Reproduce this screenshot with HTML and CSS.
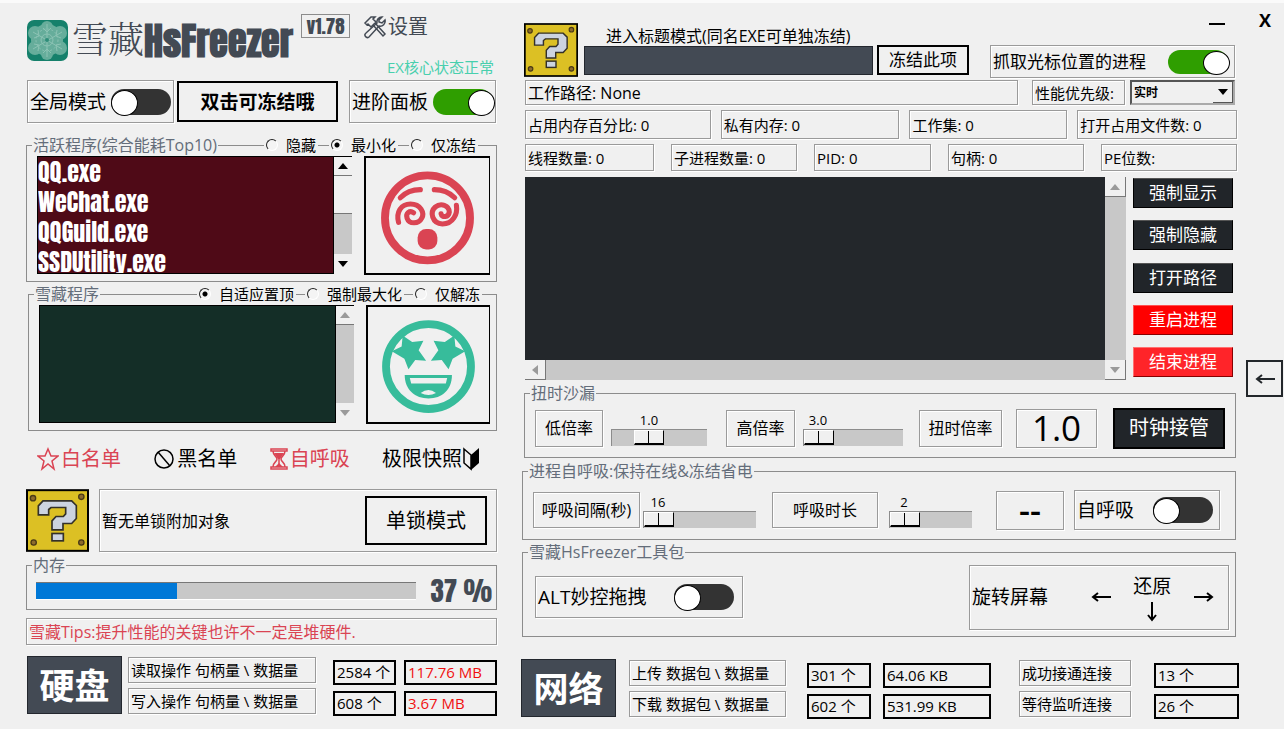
FILE: index.html
```
<!DOCTYPE html>
<html lang="zh-CN">
<head>
    <meta charset="UTF-8">
    <meta name="viewport" content="width=device-width, initial-scale=1.0">
    <title>雪藏HsFreezer</title>
    <link rel="stylesheet" href="styles.css">
</head>
<body>

<!-- shared icons -->
<svg class="defs" aria-hidden="true">
    <symbol id="block" viewBox="18 27 189 188">
        <rect x="18" y="27" width="189" height="188" fill="#000"/>
        <rect x="24" y="33" width="177" height="176" fill="#dcc024"/>
        <g fill="#8d6b2c" stroke="#4a3a16" stroke-width="4">
            <circle cx="39" cy="54" r="8"/><circle cx="184" cy="50" r="8"/>
            <circle cx="41" cy="187" r="8"/><circle cx="184" cy="187" r="8"/>
        </g>
        <g fill="#ccd3e0" stroke="#333029" stroke-width="5">
            <path d="M55 104V77L69 62H155L169 76V115L155 130H129V149H96V122L108 109H130L137 101V82H93L86 88V104Z"/>
            <rect x="96" y="160" width="34" height="22"/>
        </g>
    </symbol>
    <symbol id="up" viewBox="0 0 10 6"><path d="M0 6L5 0L10 6Z" fill="currentColor"/></symbol>
    <symbol id="down" viewBox="0 0 10 6"><path d="M0 0L5 6L10 0Z" fill="currentColor"/></symbol>
    <symbol id="left" viewBox="0 0 6 10"><path d="M6 0L0 5L6 10Z" fill="currentColor"/></symbol>
    <symbol id="arrow" viewBox="0 0 20 12"><path d="M2 6H20M7 2L2 6L7 10" fill="none" stroke="currentColor" stroke-width="2"/></symbol>
</svg>

<div class="top-edge"></div>

<div class="window">

<!-- left side -->
<div class="left">
    <header class="header">
        <svg class="logo" viewBox="0 0 41 41" aria-hidden="true">
            <rect width="41" height="41" rx="7" fill="#15806b"/>
            <g fill="#66ad9b">
                <circle cx="20" cy="20" r="16"/>
                <circle cx="20" cy="7" r="6"/><circle cx="20" cy="34" r="6"/>
                <circle cx="8" cy="13" r="7"/><circle cx="33" cy="13" r="7"/>
                <circle cx="8" cy="28" r="7"/><circle cx="33" cy="28" r="7"/>
            </g>
            <g fill="none" stroke="#8cc3b4" stroke-width="1">
                <path d="M20 4V37M6 12L35 29M35 12L6 29M16 8L20 12L24 8M16 33L20 29L24 33M7 18L12 16L11 10M34 18L29 16L30 10M7 24L12 25L11 31M34 24L29 25L30 31"/>
                <circle cx="20" cy="20" r="6"/><circle cx="20" cy="20" r="11" stroke-dasharray="2 2"/>
            </g>
            <circle cx="20" cy="20" r="2" fill="#2f8d79"/>
        </svg>
        <h1 class="brand"><span class="brand-cn">雪藏</span><span class="brand-en heavy">HsFreezer</span></h1>
        <div class="header-side">
            <div class="header-top">
                <span class="version heavy">v1.78</span>
                <button class="settings">
                    <svg width="24" height="24" viewBox="0 0 24 24" fill="none" stroke="currentColor" stroke-width="1.5" aria-hidden="true">
                        <path d="M2 8L8 2L12 2L10 4L13 7L8 12L5 9L4 10Z"/>
                        <path d="M10 10L20 21L22 19L12 8"/>
                        <path d="M19 2A5 5 0 0 0 14 8L3 18A2 2 0 0 0 6 22L16 11A5 5 0 0 0 22 5L19 8L16 7L16 5Z"/>
                    </svg>设置
                </button>
            </div>
            <span class="core-state">EX核心状态正常</span>
        </div>
    </header>

    <div class="mode-row">
        <label class="box switch-box">全局模式 <input type="checkbox" class="switch"></label>
        <button class="btn-line freeze-btn">双击可冻结哦</button>
        <label class="box switch-box">进阶面板 <input type="checkbox" class="switch" checked></label>
    </div>

    <fieldset class="group programs">
        <legend>活跃程序(综合能耗Top10)</legend>
        <div class="radios">
            <label><input type="radio" name="freeze" class="radio"> 隐藏</label>
            <label><input type="radio" name="freeze" class="radio" checked> 最小化</label>
            <label><input type="radio" name="freeze" class="radio"> 仅冻结</label>
        </div>
        <div class="list-row">
            <ul class="list list-active heavy">
                <li>QQ.exe</li>
                <li>WeChat.exe</li>
                <li>QQGuild.exe</li>
                <li>SSDUtility.exe</li>
            </ul>
            <div class="scroll">
                <button class="scroll-btn" aria-label="上"><svg width="10" height="6"><use href="#up"/></svg></button>
                <span class="scroll-thumb"></span>
                <span class="scroll-track"></span>
                <button class="scroll-btn" aria-label="下"><svg width="10" height="6"><use href="#down"/></svg></button>
            </div>
            <button class="face" aria-label="冻结">
                <svg viewBox="24 31 356 338" fill="none" stroke="#da4453" stroke-linecap="round">
                    <circle cx="202" cy="207" r="125" stroke-width="23"/>
                    <path d="M122 148Q145 124 181 124M222 124Q258 124 282 148" stroke-width="15"/>
                    <path d="M117 220C109 190 124 166 152 166C182 166 194 192 185 208C176 226 148 226 142 208C137 193 150 184 161 192" stroke-width="15"/>
                    <path d="M287 170C291 196 277 225 246 225C215 223 208 190 225 175C241 162 266 170 266 190C264 206 244 207 242 195" stroke-width="15"/>
                    <rect x="173" y="240" width="58" height="60" rx="25" fill="#da4453" stroke="none"/>
                </svg>
            </button>
        </div>
    </fieldset>

    <fieldset class="group programs frozen">
        <legend>雪藏程序</legend>
        <div class="radios">
            <label><input type="radio" name="thaw" class="radio" checked> 自适应置顶</label>
            <label><input type="radio" name="thaw" class="radio"> 强制最大化</label>
            <label><input type="radio" name="thaw" class="radio"> 仅解冻</label>
        </div>
        <div class="list-row">
            <ul class="list list-frozen heavy"></ul>
            <div class="scroll scroll-off">
                <button class="scroll-btn" aria-label="上"><svg width="10" height="6"><use href="#up"/></svg></button>
                <span class="scroll-track"></span>
                <button class="scroll-btn" aria-label="下"><svg width="10" height="6"><use href="#down"/></svg></button>
            </div>
            <button class="face" aria-label="解冻">
                <svg viewBox="28 476 356 338" fill="#37bc9b">
                    <circle cx="206" cy="651" r="125" fill="none" stroke="#37bc9b" stroke-width="23"/>
                    <path d="M130 560L158 579L191 575L177 603L199 634L167 632L147 659L135 628L98 606L127 592Z"/>
                    <path d="M282 560L254 579L221 575L235 603L213 634L245 632L265 659L277 628L314 606L285 592Z"/>
                    <path d="M136 676H275C275 720 245 745 206 745C167 745 136 720 136 676Z"/>
                    <path d="M151 685H261L257 701H155ZM183 729Q206 711 228 729Q206 741 183 729Z" fill="#f0f0f0"/>
                </svg>
            </button>
        </div>
    </fieldset>

    <nav class="links">
        <a href="#" class="red">
            <svg width="22" height="24" viewBox="1 0 22 24" fill="none" stroke="currentColor" stroke-width="1.5" aria-hidden="true"><path d="M12 2L15 9H22L16 14L18 22L12 17L6 22L8 14L2 9H9Z"/></svg>白名单</a>
        <a href="#">
            <svg width="22" height="24" viewBox="1 0 22 24" fill="none" stroke="currentColor" stroke-width="1.5" aria-hidden="true"><circle cx="12" cy="12" r="9"/><path d="M6 5L18 19"/></svg>黑名单</a>
        <a href="#" class="red">
            <svg width="18" height="24" viewBox="0 0 18 24" fill="none" stroke="currentColor" stroke-width="1.5" aria-hidden="true"><path d="M1 2H17V4H1ZM1 20H17V22H1ZM3 4C3 9 7 9 7 12C7 15 3 15 3 20M15 4C15 9 11 9 11 12C11 15 15 15 15 20M9 12V17"/><path d="M4 6H14L10 12H8ZM5 20L9 16L13 20Z" fill="currentColor" stroke="none"/></svg>自呼吸</a>
        <a href="#">极限快照<svg width="18" height="24" viewBox="0 0 18 24" aria-hidden="true"><path d="M2 2L9 8V22L2 16Z" fill="none" stroke="#000" stroke-width="1.5"/><path d="M9 8L17 1V16L9 23Z"/></svg></a>
    </nav>

    <div class="lock-row">
        <svg class="block-lg" aria-hidden="true"><use href="#block"/></svg>
        <div class="box lock-box">
            <span>暂无单锁附加对象</span>
            <button class="btn-line lock-btn">单锁模式</button>
        </div>
    </div>

    <fieldset class="group memory">
        <legend>内存</legend>
        <div class="memory-row">
            <div class="bar"><div class="bar-fill" style="width: 37%"></div></div>
            <span class="percent heavy">37 %</span>
        </div>
    </fieldset>

    <p class="box tips">雪藏Tips:提升性能的关键也许不一定是堆硬件.</p>

    <div class="stats">
        <div class="stats-title">硬盘</div>
        <div class="stats-col stats-names">
            <span class="box">读取操作 句柄量 \ 数据量</span>
            <span class="box">写入操作 句柄量 \ 数据量</span>
        </div>
        <div class="stats-col values disk-count">
            <span class="value">2584 个</span>
            <span class="value">608 个</span>
        </div>
        <div class="stats-col values disk-size">
            <span class="value value-red">117.76 MB</span>
            <span class="value value-red">3.67 MB</span>
        </div>
    </div>
</div>

<!-- right side -->
<div class="right">
    <div class="title-row">
        <svg class="block-sm" aria-hidden="true"><use href="#block"/></svg>
        <div class="title-mode">
            <label for="title">进入标题模式(同名EXE可单独冻结)</label>
            <input type="text" id="title" class="title-input">
        </div>
        <button class="btn-line item-btn">冻结此项</button>
        <div class="grab">
            <button class="minimize" aria-label="最小化"></button>
            <label class="box switch-box grab-box">抓取光标位置的进程 <input type="checkbox" class="switch" checked></label>
        </div>
    </div>

    <div class="path-row">
        <span class="box path">工作路径: None</span>
        <label class="box priority" for="priority">性能优先级:</label>
        <div class="select">
            <select id="priority"><option>实时</option></select>
            <span class="select-arrow"><svg width="10" height="6"><use href="#down"/></svg></span>
        </div>
    </div>

    <div class="info-row info-four">
        <span class="box">占用内存百分比: 0</span>
        <span class="box">私有内存: 0</span>
        <span class="box">工作集: 0</span>
        <span class="box">打开占用文件数: 0</span>
    </div>
    <div class="info-row info-five">
        <span class="box">线程数量: 0</span>
        <span class="box">子进程数量: 0</span>
        <span class="box">PID: 0</span>
        <span class="box">句柄: 0</span>
        <span class="box">PE位数:</span>
    </div>

    <div class="console-row">
        <div class="console">
            <textarea class="console-text" aria-label="进程信息" readonly></textarea>
            <div class="scroll-h">
                <button class="scroll-btn" aria-label="左"><svg width="6" height="10"><use href="#left"/></svg></button>
            </div>
        </div>
        <div class="scroll scroll-off scroll-wide">
            <button class="scroll-btn" aria-label="上"><svg width="10" height="6"><use href="#up"/></svg></button>
            <span class="scroll-track"></span>
            <button class="scroll-btn" aria-label="下"><svg width="10" height="6"><use href="#down"/></svg></button>
        </div>
        <div class="actions">
            <button class="action">强制显示</button>
            <button class="action">强制隐藏</button>
            <button class="action">打开路径</button>
            <button class="action action-red">重启进程</button>
            <button class="action action-light">结束进程</button>
        </div>
    </div>

    <fieldset class="group speed">
        <legend>扭时沙漏</legend>
        <div class="speed-row">
            <label class="box cell" for="low">低倍率</label>
            <div class="slider slider-low">
                <output>1.0</output>
                <input type="range" id="low" min="0" max="3" value="1">
            </div>
            <label class="box cell" for="high">高倍率</label>
            <div class="slider">
                <output>3.0</output>
                <input type="range" id="high" min="3" max="10" value="3">
            </div>
            <span class="box cell">扭时倍率</span>
            <span class="box cell big">1.0</span>
            <button class="clock-btn">时钟接管</button>
        </div>
    </fieldset>

    <fieldset class="group breath">
        <legend>进程自呼吸:保持在线&amp;冻结省电</legend>
        <div class="breath-row">
            <label class="box cell" for="gap">呼吸间隔(秒)</label>
            <div class="slider slider-gap">
                <output>16</output>
                <input type="range" id="gap" min="16" max="60" value="16">
            </div>
            <label class="box cell cell-time" for="time">呼吸时长</label>
            <div class="slider slider-time">
                <output>2</output>
                <input type="range" id="time" min="2" max="10" value="2">
            </div>
            <span class="box cell dashes">--</span>
            <label class="box switch-box">自呼吸 <input type="checkbox" class="switch"></label>
        </div>
    </fieldset>

    <fieldset class="group tools">
        <legend>雪藏HsFreezer工具包</legend>
        <div class="tools-row">
            <label class="box switch-box alt-box">ALT妙控拖拽 <input type="checkbox" class="switch"></label>
            <div class="box rotate">
                <span>旋转屏幕</span>
                <button aria-label="左转"><svg width="20" height="12"><use href="#arrow"/></svg></button>
                <div class="rotate-mid">
                    <button>还原</button>
                    <button aria-label="翻转"><svg class="arrow-down" width="20" height="12"><use href="#arrow"/></svg></button>
                </div>
                <button aria-label="右转"><svg class="arrow-right" width="20" height="12"><use href="#arrow"/></svg></button>
            </div>
        </div>
    </fieldset>

    <div class="stats net">
        <div class="stats-title">网络</div>
        <div class="stats-col net-names">
            <span class="box">上传 数据包 \ 数据量</span>
            <span class="box">下载 数据包 \ 数据量</span>
        </div>
        <div class="stats-col values net-count">
            <span class="value">301 个</span>
            <span class="value">602 个</span>
        </div>
        <div class="stats-col values net-size">
            <span class="value">64.06 KB</span>
            <span class="value">531.99 KB</span>
        </div>
        <div class="stats-col net-link">
            <span class="box">成功接通连接</span>
            <span class="box">等待监听连接</span>
        </div>
        <div class="stats-col values net-total">
            <span class="value">13 个</span>
            <span class="value">26 个</span>
        </div>
    </div>
</div>

<!-- window edge -->
<div class="edge">
    <button class="close">X</button>
    <button class="collapse" aria-label="收起"><svg width="20" height="12"><use href="#arrow"/></svg></button>
</div>

</div>
</body>
</html>
```
FILE: styles.css
```
* {
    box-sizing: border-box;
}

body {
    margin: 0;
    background-color: #f0f0f0;
    color: #000;
    font-family: "Open Sans", "Noto Sans CJK SC", sans-serif;
    font-size: 15px;
    line-height: 20px;
}

button, input, select, textarea {
    margin: 0;
    padding: 0;
    border: 0;
    border-radius: 0;
    background: none;
    color: inherit;
    font: inherit;
}

svg {
    display: block;
    flex: none;
}

h1, p, ul {
    margin: 0;
    padding: 0;
    font-weight: normal;
}

a {
    color: inherit;
    text-decoration: none;
}

.defs {
    position: absolute;
    width: 0;
    height: 0;
}

.top-edge {
    height: 3px;
    background-color: #fafafa;
}

.window {
    display: grid;
    grid-template-columns: minmax(0, 471fr) minmax(0, 749fr) 38px;
    padding-left: 26px;
}

.left {
    padding-top: 11px;
}

.right {
    padding-top: 17px;
    margin-left: 25px;
    margin-right: 9px;
}

.heavy {
    font-family: Impact, "Anton", "Liberation Sans Narrow", "Liberation Sans", sans-serif;
    font-weight: normal;
}

/* common boxes */
.box {
    display: flex;
    align-items: center;
    border: 1px solid #9a9a9a;
    box-shadow: 1px 1px 0 #fff, inset 1px 1px 0 #fff;
    padding: 0 2px;
    white-space: nowrap;
}

.btn-line {
    border: 2px solid #000;
    text-align: center;
    white-space: nowrap;
}

.group {
    position: relative;
    margin: 0;
    padding: 0;
    border: 1px solid #8c8c8c;
    min-width: 0;
}

.group legend {
    margin-left: 5px;
    padding: 0 1px;
    height: 20px;
    color: #646d7a;
    font-size: 16px;
}

/* switches */
.switch-box {
    justify-content: space-between;
    font-size: 19px;
}

.switch {
    appearance: none;
    flex: none;
    position: relative;
    width: 60px;
    height: 26px;
    border-radius: 13px;
    background-color: #333;
}

.switch::before {
    content: "";
    position: absolute;
    top: 1px;
    left: 0;
    width: 25px;
    height: 24px;
    border: 1px solid #000;
    border-radius: 50%;
    background-color: #fff;
}

.switch:checked {
    background-color: #2f9e00;
}

.switch:checked::before {
    left: 35px;
}

/* header */
.header {
    display: flex;
    justify-content: space-between;
    height: 63px;
}

.logo {
    width: 41px;
    height: 41px;
    margin: 6px 4px 0 1px;
}

.brand {
    display: flex;
    flex: 1;
    margin-top: 7px;
    color: #434a54;
    font-size: 36px;
    line-height: 40px;
}

.brand-cn {
    font-family: "Liberation Serif", "Noto Serif CJK SC", "Noto Sans CJK SC", serif;
    font-weight: 300;
}

.brand-en {
    font-size: 38px;
    font-weight: bold;
}

.header-side {
    display: flex;
    flex-direction: column;
    justify-content: space-between;
    width: 196px;
    padding-right: 3px;
}

.header-top {
    display: flex;
    gap: 13px;
}

.version {
    width: 49px;
    height: 24px;
    border: 1px solid #8c8c8c;
    color: #434a54;
    font-size: 19px;
    line-height: 23px;
    text-align: center;
}

.settings {
    display: flex;
    align-items: center;
    gap: 1px;
    height: 26px;
    color: #434a54;
    font-size: 20px;
}

.core-state {
    align-self: flex-end;
    color: #48cfad;
}

.mode-row {
    display: flex;
    margin: 3px 1px 0 1px;
    height: 43px;
}

.mode-row .switch-box {
    width: 147px;
}

.freeze-btn {
    flex: 1;
    margin: 1px 11px 1px 3px;
    font-size: 19px;
    font-weight: bold;
}

/* program lists */
.programs {
    margin-top: 12px;
    height: 147px;
}

.frozen {
    margin: 2px 0 0 2px;
}

.radios {
    position: absolute;
    top: -20px;
    right: 18px;
    display: flex;
    gap: 11px;
}

.frozen .radios {
    right: 14px;
    gap: 9px;
}

.radios label {
    display: flex;
    align-items: center;
    gap: 8px;
    padding: 0 2px;
    background-color: #f0f0f0;
}

.radio {
    appearance: none;
    width: 12px;
    height: 12px;
    border: 1px solid;
    border-color: #222 #fff #fff #222;
    border-radius: 50%;
    background-color: #f4f4f4;
}

.radio:checked {
    background-image: radial-gradient(circle, #000 2px, transparent 3px);
}

.list-row {
    display: flex;
    align-items: flex-start;
    padding: 1px 6px 0 10px;
}

.list {
    flex: 1;
    height: 118px;
    overflow: hidden;
    border: 1px solid #000;
    color: #fff;
    font-size: 24px;
    line-height: 30px;
    list-style: none;
}

.list-active {
    background-color: #4f0a17;
}

.list-frozen {
    background-color: #142e27;
}

.scroll {
    display: flex;
    flex-direction: column;
    width: 18px;
    height: 118px;
    margin-right: 12px;
}

.scroll-btn {
    display: flex;
    align-items: center;
    justify-content: center;
    height: 20px;
    border-right: 1px solid #777;
    border-bottom: 1px solid #777;
    background-color: #f0f0f0;
    color: #000;
}

.scroll-off .scroll-btn, .scroll-h .scroll-btn {
    color: #9a9a9a;
}

.scroll .scroll-btn:first-child {
    border-top: 1px solid #000;
}

.programs .scroll-btn {
    border-right: 0;
}

.programs .scroll-btn:last-child {
    border-bottom: 0;
}

.scroll-thumb {
    height: 38px;
    border-bottom: 1px solid #777;
}

.scroll-track {
    flex: 1;
    background-color: #c8c8c8;
}

.face {
    width: 126px;
    height: 119px;
    border: 2px solid #000;
    border-right-width: 1px;
}

.frozen .face {
    width: 124px;
}

.face svg {
    width: 100%;
    height: 100%;
}

/* links */
.links {
    display: flex;
    justify-content: space-between;
    height: 24px;
    margin: 16px 17px 0 11px;
    font-size: 20px;
}

.links a {
    display: flex;
    align-items: center;
    gap: 2px;
    line-height: 24px;
}

.links a:last-child {
    gap: 0;
}

.red {
    color: #da4453;
}

/* single lock */
.lock-row {
    display: flex;
    gap: 10px;
    margin-top: 18px;
}

.block-lg {
    width: 63px;
    height: 63px;
}

.block-sm {
    width: 54px;
    height: 54px;
}

.lock-box {
    flex: 1;
    justify-content: space-between;
    padding-right: 9px;
    font-size: 16px;
}

.lock-btn {
    width: 122px;
    height: 49px;
    font-size: 20px;
}

/* memory */
.memory {
    margin-top: 3px;
    height: 55px;
}

.memory-row {
    display: flex;
    align-items: center;
    justify-content: space-between;
    gap: 14px;
    padding: 0 4px 0 9px;
    height: 32px;
}

.bar {
    flex: 1;
    height: 18px;
    border-top: 1px solid #777;
    border-bottom: 1px solid #fff;
    background-color: #c8c8c8;
}

.bar-fill {
    height: 100%;
    background-color: #0078d7;
}

.percent {
    color: #434a54;
    font-size: 27px;
    line-height: 32px;
}

.tips {
    height: 27px;
    margin-top: 8px;
    color: #da4453;
    font-size: 16px;
}

/* bottom stats */
.stats {
    display: flex;
    margin: 11px 0 0 1px;
}

.stats-title {
    width: 95px;
    height: 58px;
    border: 1px solid #23272e;
    background-color: #434a54;
    color: #fff;
    font-size: 35px;
    font-weight: bold;
    line-height: 58px;
    text-align: center;
}

.stats-col {
    display: flex;
    flex-direction: column;
    gap: 5px;
    padding-top: 1px;
}

.stats-col .box {
    height: 26px;
}

.values {
    gap: 6px;
    padding-top: 4px;
}

.value {
    flex: none;
    height: 25px;
    padding-left: 2px;
    border: 2px solid #000;
    line-height: 21px;
    white-space: nowrap;
}

.value-red {
    color: #f01010;
}

.stats-names {
    flex: 1;
    margin: 0 17px 0 6px;
}

.disk-count {
    width: 63px;
}

.disk-size {
    width: 93px;
    margin-left: 8px;
}

/* title mode */
.title-row {
    display: flex;
    padding: 3px 2px 0 2px;
}

.title-mode {
    display: flex;
    flex: 1;
    flex-direction: column;
    margin: 3px 4px 0 6px;
    font-size: 16px;
}

.title-mode label {
    padding-left: 22px;
}

.title-input {
    width: 100%;
    height: 29px;
    border: 1px solid #23272e;
    background-color: #434a54;
    color: #fff;
}

.item-btn {
    width: 92px;
    height: 30px;
    margin-top: 22px;
    font-size: 17px;
}

.grab {
    display: flex;
    flex-direction: column;
    justify-content: space-between;
    width: 245px;
    height: 55px;
    margin-left: 21px;
}

.grab-box {
    height: 33px;
    padding-right: 6px;
    font-size: 17px;
}

.grab .switch {
    height: 24px;
}

.grab .switch::before {
    top: 1px;
    height: 22px;
}

.minimize {
    align-self: flex-end;
    width: 16px;
    height: 2px;
    margin-right: 10px;
    background-color: #000;
}

.path-row {
    display: flex;
    height: 25px;
    margin: 2px 2px 0 3px;
}

.path {
    flex: 1;
    font-size: 16px;
}

.priority {
    width: 93px;
    margin: 0 5px 0 14px;
}

.select {
    position: relative;
    width: 105px;
    border: 2px solid;
    border-color: #555 #aaa #aaa #555;
}

.select select {
    appearance: none;
    display: block;
    width: 100%;
    height: 100%;
    padding-left: 2px;
    font-size: 12px;
    font-weight: bold;
    line-height: 20px;
}

.select-arrow {
    position: absolute;
    top: 0;
    right: 0;
    bottom: 0;
    display: flex;
    align-items: center;
    justify-content: center;
    width: 20px;
    border-right: 1px solid #555;
    border-bottom: 1px solid #555;
    background-color: #f0f0f0;
    pointer-events: none;
}

.info-row {
    display: grid;
    margin: 5px 0 0 3px;
}

.info-row .box {
    height: 27px;
}

.info-four {
    grid-template-columns: 186fr 179fr 158fr 160fr;
    gap: 10px;
}

.info-four .box {
    height: 29px;
}

.info-five {
    grid-template-columns: 129fr 126fr 117fr 136fr 136fr;
    gap: 17px;
}

/* console */
.console-row {
    display: flex;
    height: 203px;
    margin: 6px 4px 0 3px;
}

.console {
    display: flex;
    flex: 1;
    flex-direction: column;
}

.console-text {
    flex: 1;
    resize: none;
    background-color: #23272b;
    color: #fff;
}

.scroll-h {
    height: 20px;
    background-color: #c8c8c8;
}

.scroll-h .scroll-btn {
    width: 21px;
}

.scroll-wide {
    width: 21px;
    height: 100%;
    margin-right: 7px;
}

.scroll-wide .scroll-btn:first-child {
    border-top: 0;
}

.actions {
    display: flex;
    flex-direction: column;
    justify-content: space-between;
    width: 100px;
    padding: 1px 0 3px;
}

.action {
    height: 30px;
    border: 1px solid #000;
    border-top-color: #555;
    background-color: #212529;
    color: #fff;
    font-size: 17px;
}

.action-red {
    border-color: #ff5050 #800 #800 #ff5050;
    background-color: #f00;
}

.action-light {
    border-color: #ff7070 #800 #800 #ff7070;
    background-color: #ff2429;
}

/* sliders */
.cell {
    justify-content: center;
    font-size: 16px;
}

.slider {
    display: flex;
    flex-direction: column;
    margin-right: 8px;
}

.slider output {
    width: 30px;
    font-size: 13px;
    line-height: 18px;
    text-align: center;
}

.slider-low {
    margin-right: 11px;
}

.slider-low output {
    margin-left: 23px;
}

.slider-gap {
    margin-right: 13px;
}

.slider-time {
    margin-right: 21px;
}

.slider input {
    appearance: none;
    width: 100%;
    height: 17px;
    border-top: 1px solid #8c8c8c;
    border-left: 1px solid #8c8c8c;
    background-color: #c8c8c8;
}

.slider input::-webkit-slider-thumb {
    appearance: none;
    width: 30px;
    height: 15px;
    border: 1px solid;
    border-color: #fff #000 #000 #fff;
    border-bottom-width: 2px;
    background: linear-gradient(90deg, #f0f0f0 13px, #000 13px, #000 14px, #f0f0f0 14px);
}

.speed {
    height: 75px;
    margin: 3px 1px 0 2px;
}

.speed-row {
    display: grid;
    grid-template-columns: 68fr 107fr 69fr 108fr 83fr 87fr 120fr;
    column-gap: 8px;
    align-items: center;
    padding: 0 10px;
    height: 50px;
}

.speed-row .cell {
    height: 37px;
}

.speed-row .big {
    height: 39px;
    margin-left: 6px;
    font-size: 35px;
}

.clock-btn {
    height: 41px;
    margin-left: 8px;
    border: 2px solid #000;
    background-color: #212529;
    color: #fff;
    font-size: 20px;
}

.breath {
    height: 79px;
    margin: 3px 1px 0 0;
}

.breath-row {
    display: grid;
    grid-template-columns: 107fr 126fr 114fr 104fr 75fr 146fr;
    column-gap: 3px;
    align-items: center;
    padding: 2px 15px 0 10px;
    height: 56px;
}

.breath-row .cell {
    height: 36px;
    padding: 0;
}

.breath-row .cell-time {
    margin-right: 8px;
}

.breath-row .dashes {
    height: 39px;
    margin-right: 7px;
    font-size: 34px;
    font-weight: 600;
}

.breath-row .switch-box {
    height: 40px;
    padding-right: 6px;
}

.tools {
    height: 95px;
    margin: 2px 1px 0 0;
}

.tools-row {
    display: flex;
    align-items: center;
    justify-content: space-between;
    padding: 0 6px 0 12px;
    height: 70px;
}

.alt-box {
    width: 208px;
    height: 42px;
    padding-right: 8px;
}

.rotate {
    justify-content: space-between;
    width: 260px;
    height: 65px;
    padding-right: 14px;
    font-size: 19px;
}

.rotate > span {
    margin-right: 20px;
}

.rotate-mid {
    display: flex;
    flex-direction: column;
    align-items: center;
    gap: 10px;
}

.arrow-right {
    transform: rotate(180deg);
}

.arrow-down {
    transform: rotate(-90deg);
}

/* network */
.net {
    margin: 22px -2px 0 -1px;
}

.net-names {
    flex: 1;
    margin-left: 13px;
}

.net-count {
    width: 64px;
    margin-left: 21px;
}

.net-size {
    width: 108px;
    margin-left: 12px;
}

.net-link {
    width: 112px;
    margin-left: 28px;
}

.net-total {
    width: 85px;
    margin-left: 23px;
}

.edge {
    display: flex;
    flex-direction: column;
}

.close {
    width: 38px;
    height: 34px;
    font-size: 18px;
    font-weight: bold;
}

.collapse {
    display: flex;
    align-items: center;
    justify-content: center;
    width: 37px;
    height: 37px;
    margin-top: 323px;
    border: 2px solid #23272b;
    color: #23272b;
}
```
